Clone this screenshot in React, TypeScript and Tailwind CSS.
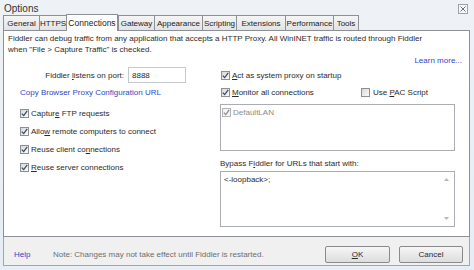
import React from "react";

const Check = ({ checked = true, disabled = false }: { checked?: boolean; disabled?: boolean }) => (
  <span
    className={
      "w-[9px] h-[9px] border shrink-0 flex items-center justify-center " +
      (disabled ? "border-[#b4b4b4] bg-[#f4f4f4]" : "border-[#8e8f8f] bg-linear-to-br from-[#d8d8d8] to-[#fbfbfb]")
    }
  >
    {checked && (
      <svg width="7" height="7" viewBox="0 0 7 7">
        <path
          d="M0.8 3.6 L2.7 5.6 L6.2 0.9"
          stroke={disabled ? "#8b8b8b" : "#3a4b6b"}
          strokeWidth="1.3"
          fill="none"
        />
      </svg>
    )}
  </span>
);

const U = ({ children }: { children: React.ReactNode }) => <span className="underline underline-offset-1">{children}</span>;

const tabs: [string, number][] = [
  ["General", 37],
  ["HTTPS", 28],
  ["Connections", 52],
  ["Gateway", 37],
  ["Appearance", 49],
  ["Scripting", 35],
  ["Extensions", 50],
  ["Performance", 49],
  ["Tools", 26],
];

export default function App() {
  return (
    <div className="w-[474px] h-[270px] overflow-hidden bg-linear-to-b from-[#eef2f6] to-[#e6edf4] text-[#2b2b2b] font-['Liberation_Sans',Arial,sans-serif] text-[8px] leading-[11px] flex flex-col">
      {/* title bar */}
      <div className="h-[14px] flex items-center justify-between pl-[4px] pr-[6px] pt-[3px]">
        <span className="text-[10px] leading-[12px] text-[#333]">Options</span>
        <span className="w-[10px] h-[10px] border border-[#9aa3ad] bg-[#f6f7f8] flex items-center justify-center">
          <svg width="6" height="6" viewBox="0 0 6 6">
            <path d="M0.5 0.5 L5.5 5.5 M5.5 0.5 L0.5 5.5" stroke="#6b7079" strokeWidth="1" />
          </svg>
        </span>
      </div>

      <div className="ml-[3px] w-[467px] flex flex-col">
        {/* tabs */}
        <div className="h-[16px] flex items-end relative z-10">
          {tabs.map(([t, w]) =>
            t === "Connections" ? (
              <div
                key={t}
                style={{ width: w }}
                className="h-[17px] -mb-px border-t border-x border-[#8d9097] bg-white flex items-center justify-center text-[8.5px] text-[#222]"
              >
                {t}
              </div>
            ) : (
              <div
                key={t}
                style={{ width: w }}
                className="h-[15px] border-t border-l border-r border-[#8d9097] -mr-px last:mr-0 bg-linear-to-b from-[#f5f5f5] to-[#e3e3e3] flex items-center justify-center text-[#222]"
              >
                {t}
              </div>
            )
          )}
        </div>

        {/* panel */}
        <div className="h-[207px] border border-[#8d9097] bg-white flex flex-col pl-[4px] pr-[7px] pt-[2px]">
          <div>Fiddler can debug traffic from any application that accepts a HTTP Proxy. All WinINET traffic is routed through Fiddler</div>
          <div>when "File &gt; Capture Traffic" is checked.</div>
          <div className="text-right text-[#2f48c9]">Learn more...</div>

          <div className="flex">
            {/* left column */}
            <div className="w-[212px] flex flex-col">
              <div className="h-[16px] mt-[1px] flex items-center">
                <span className="w-[116px] text-right">
                  Fiddler <U>l</U>istens on port:
                </span>
                <span className="ml-[4px] w-[58px] h-[16px] border border-[#c5c8cc] flex items-center pl-[3px]">8888</span>
              </div>
              <div className="mt-[4px] pl-[12px] text-[#2f48c9]">Copy Browser Proxy Configuration URL</div>
              <div className="mt-[6px] pl-[12px] flex flex-col">
                <div className="h-[18px] flex items-center gap-[2px]">
                  <Check />
                  <span>
                    Captur<U>e</U> FTP requests
                  </span>
                </div>
                <div className="h-[18px] flex items-center gap-[2px]">
                  <Check />
                  <span>
                    Allo<U>w</U> remote computers to connect
                  </span>
                </div>
                <div className="h-[18px] flex items-center gap-[2px]">
                  <Check />
                  <span>
                    Reuse client co<U>n</U>nections
                  </span>
                </div>
                <div className="h-[18px] flex items-center gap-[2px]">
                  <Check />
                  <span>
                    <U>R</U>euse server connections
                  </span>
                </div>
              </div>
            </div>

            {/* right column */}
            <div className="w-[235px] flex flex-col">
              <div className="h-[16px] mt-[1px] pl-[1px] flex items-center gap-[2px]">
                <Check />
                <span>
                  <U>A</U>ct as system proxy on startup
                </span>
              </div>
              <div className="h-[16px] mt-[1px] pl-[1px] flex items-center">
                <div className="w-[140px] flex items-center gap-[2px]">
                  <Check />
                  <span>
                    <U>M</U>onitor all connections
                  </span>
                </div>
                <div className="flex items-center gap-[3px]">
                  <Check checked={false} />
                  <span>
                    Use <U>P</U>AC Script
                  </span>
                </div>
              </div>
              <div className="mt-[4px] h-[47px] border border-[#abadb3] pl-[1px] pt-[2px]">
                <div className="flex items-center gap-[2px] text-[#8a8a8a]">
                  <Check disabled />
                  <span>DefaultLAN</span>
                </div>
              </div>
              <div className="mt-[7px]">
                Bypass F<U>i</U>ddler for URLs that start with:
              </div>
              <div className="mt-[2px] h-[56px] border border-[#abadb3] flex">
                <div className="flex-1 pl-[3px] pt-[2px]">&lt;-loopback&gt;;</div>
                <div className="w-[16px] flex flex-col items-center justify-between py-[6px]">
                  <svg width="5" height="3" viewBox="0 0 5 3">
                    <path d="M0 3 L2.5 0 L5 3 Z" fill="#b8b8b8" />
                  </svg>
                  <svg width="5" height="3" viewBox="0 0 5 3">
                    <path d="M0 0 L2.5 3 L5 0 Z" fill="#b8b8b8" />
                  </svg>
                </div>
              </div>
            </div>
          </div>
        </div>

        {/* bottom bar */}
        <div className="h-[29px] bg-[#f0f0f0] border-x border-b border-[#a3a6ab] flex items-start pt-[9px] pl-[10px]">
          <div className="h-[17px] flex items-center w-[39px] text-[#2f48c9]">Help</div>
          <div className="h-[17px] flex items-center text-[#6e6e6e] w-[272px]">
            Note: Changes may not take effect until Fiddler is restarted.
          </div>
          <div className="w-[65px] h-[17px] border border-[#8a8a8a] rounded-[2px] bg-linear-to-b from-[#f6f6f6] to-[#dddddd] flex items-center justify-center">
            <span>
              <U>O</U>K
            </span>
          </div>
          <div className="ml-[9px] w-[64px] h-[17px] border border-[#8a8a8a] rounded-[2px] bg-linear-to-b from-[#f6f6f6] to-[#dddddd] flex items-center justify-center">
            Cancel
          </div>
        </div>
      </div>
    </div>
  );
}
